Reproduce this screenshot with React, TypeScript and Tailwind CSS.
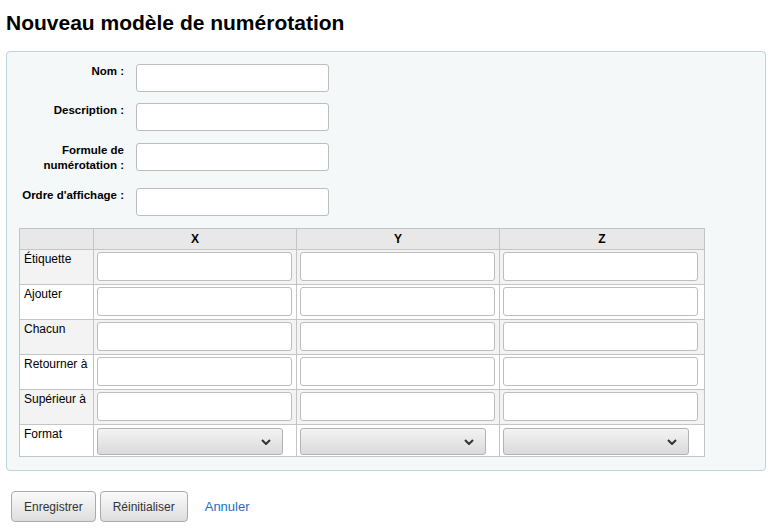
import React from "react";

const font = { fontFamily: '"Liberation Sans", Arial, sans-serif' };

function Chevron() {
  return (
    <svg width="10" height="6" viewBox="0 0 10 6" className="block">
      <path d="M1 1 L5 5 L9 1" fill="none" stroke="#333" strokeWidth="2" />
    </svg>
  );
}

function Select() {
  return (
    <div className="flex h-[27px] w-[186px] items-center justify-end rounded-[3px] border border-[#b3b3b3] bg-gradient-to-b from-[#f3f3f3] to-[#dadada] pr-[11px]">
      <Chevron />
    </div>
  );
}

function CellInput() {
  return <input className="block h-[29px] w-[195px] rounded-[3px] border border-[#bdbdbd] bg-white" />;
}

const rows = ["Étiquette", "Ajouter", "Chacun", "Retourner à", "Supérieur à"];

export default function App() {
  return (
    <div className="min-h-[532px] bg-white pl-[6px] pr-[8px] text-black" style={font}>
      <h1 className="pt-[11px] text-[21px] font-bold leading-[24px]">Nouveau modèle de numérotation</h1>
      <fieldset className="mt-[16px] rounded-[4px] border border-[#b8d8da] bg-[#f4f8f9] px-[12px] pt-[12px] pb-[13px]">
        <div className="flex flex-col">
          {[
            { l: ["Nom :"], h: "h-[39px]" },
            { l: ["Description :"], h: "h-[40px]" },
            { l: ["Formule de", "numérotation :"], h: "h-[45px]" },
            { l: ["Ordre d'affichage :"], h: "h-[40px]" },
          ].map((r, i) => (
            <div key={i} className={`flex items-start ${r.h}`}>
              <div className="w-[105px] text-right text-[11.5px] font-bold leading-[14.5px]">
                {r.l.map((t) => (
                  <div key={t}>{t}</div>
                ))}
              </div>
              <input className="ml-[12px] block h-[28px] w-[193px] rounded-[3px] border border-[#bdbdbd] bg-white" />
            </div>
          ))}
        </div>
        <table className="w-[685px] table-fixed border-collapse text-[12px] leading-[14px]">
          <colgroup>
            <col className="w-[74px]" />
            <col className="w-[203px]" />
            <col className="w-[203px]" />
            <col className="w-[205px]" />
          </colgroup>
          <thead>
            <tr className="h-[21px] bg-[#e8e8e8]">
              <th className="border border-[#c4c4c4]"></th>
              <th className="border border-[#c4c4c4] font-bold">X</th>
              <th className="border border-[#c4c4c4] font-bold">Y</th>
              <th className="border border-[#c4c4c4] font-bold">Z</th>
            </tr>
          </thead>
          <tbody>
            {rows.map((r, i) => (
              <tr key={r} className={i % 2 === 0 ? "bg-[#f3f3f3]" : "bg-white"}>
                <td className="border border-[#c4c4c4] px-[4px] pt-[2px] align-top">{r}</td>
                {[0, 1, 2].map((c) => (
                  <td key={c} className="border border-[#c4c4c4] pt-[2px] pb-[3px] pl-[3px] align-top">
                    <CellInput />
                  </td>
                ))}
              </tr>
            ))}
            <tr className="bg-white">
              <td className="border border-[#c4c4c4] px-[4px] pt-[2px] align-top">Format</td>
              {[0, 1, 2].map((c) => (
                <td key={c} className="border border-[#c4c4c4] pt-[3px] pb-[1px] pl-[3px] align-top">
                  <Select />
                </td>
              ))}
            </tr>
          </tbody>
        </table>
      </fieldset>
      <div className="mt-[20px] flex items-center pl-[5px] text-[12px]">
        <button className="h-[31px] rounded-[4px] border border-[#ababab] bg-gradient-to-b from-[#fafafa] to-[#dedede] px-[12px] text-[#333]">
          Enregistrer
        </button>
        <button className="ml-[4px] h-[31px] rounded-[4px] border border-[#ababab] bg-gradient-to-b from-[#fafafa] to-[#dedede] px-[12px] text-[#333]">
          Réinitialiser
        </button>
        <a className="ml-[17px] text-[13px] text-[#1c6fc1]">Annuler</a>
      </div>
    </div>
  );
}
